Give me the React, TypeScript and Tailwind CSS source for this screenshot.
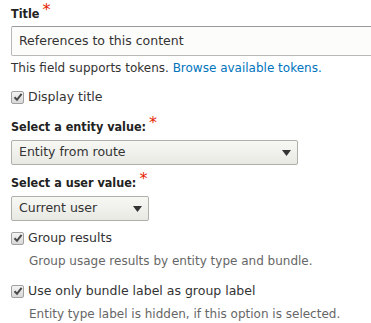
import { ReactNode } from 'react';

function Req() {
  return <span className="ml-[3px] text-[#e62600] text-[16px] leading-none relative top-[-3px] font-normal font-['DejaVu_Sans',sans-serif]">*</span>;
}

function Label({ children }: { children: ReactNode }) {
  return (
    <div className="text-[12.5px] font-bold leading-[16px] text-[#222] font-['DejaVu_Sans_Condensed','DejaVu_Sans',sans-serif]">
      {children}
      <Req />
    </div>
  );
}

function Check({ children }: { children: ReactNode }) {
  return (
    <div className="flex items-center gap-[4px] h-[16px]">
      <span className="w-[13px] h-[13px] rounded-[2px] border border-[#a0a0a0] bg-gradient-to-b from-[#f4f4f4] to-[#d8d8d8] flex items-center justify-center">
        <svg width="10" height="10" viewBox="0 0 10 10">
          <path d="M1.5 5.2 L4 7.8 L8.6 1.8" fill="none" stroke="#4a4a4a" strokeWidth="2" />
        </svg>
      </span>
      <span className="text-[12.5px] leading-[16px] text-[#333]">{children}</span>
    </div>
  );
}

function Select({ value, width }: { value: string; width: string }) {
  return (
    <div
      className={`${width} h-[25px] border border-[#b0b0ab] rounded-[2px] bg-gradient-to-b from-[#f7f7f4] to-[#e9e9e4] flex items-center justify-between pl-[7px] pr-[6px] text-[12.5px] text-[#333]`}
    >
      <span>{value}</span>
      <svg width="9" height="6" viewBox="0 0 9 6">
        <path d="M0 0 H9 L4.5 6 Z" fill="#333" />
      </svg>
    </div>
  );
}

export default function App() {
  return (
    <main className="w-[371px] h-[323px] bg-white overflow-hidden pl-[11px] pt-[5px] font-['DejaVu_Sans',sans-serif] text-[#333]">
      <Label>Title</Label>
      <div className="mt-[4px] w-[400px] h-[30px] border border-[#b8b8b8] border-t-[#999] rounded-[2px] bg-[#fcfcfa] flex items-center pl-[7px] text-[12.5px] text-[#333]">
        References to this content
      </div>
      <p className="mt-[4px] text-[12px] leading-[16px] text-[#333]">
        This field supports tokens. <span className="text-[#0074bd]">Browse available tokens.</span>
      </p>
      <div className="mt-[13px]">
        <Check>Display title</Check>
      </div>
      <div className="mt-[13px]">
        <Label>Select a entity value:</Label>
      </div>
      <div className="mt-[5px]">
        <Select value="Entity from route" width="w-[287px]" />
      </div>
      <div className="mt-[9px]">
        <Label>Select a user value:</Label>
      </div>
      <div className="mt-[5px]">
        <Select value="Current user" width="w-[138px]" />
      </div>
      <div className="mt-[9px]">
        <Check>Group results</Check>
      </div>
      <p className="mt-[7px] ml-[18px] text-[12px] leading-[16px] text-[#666]">Group usage results by entity type and bundle.</p>
      <div className="mt-[14px]">
        <Check>Use only bundle label as group label</Check>
      </div>
      <p className="mt-[7px] ml-[18px] text-[12px] leading-[16px] text-[#666]">Entity type label is hidden, if this option is selected.</p>
    </main>
  );
}
